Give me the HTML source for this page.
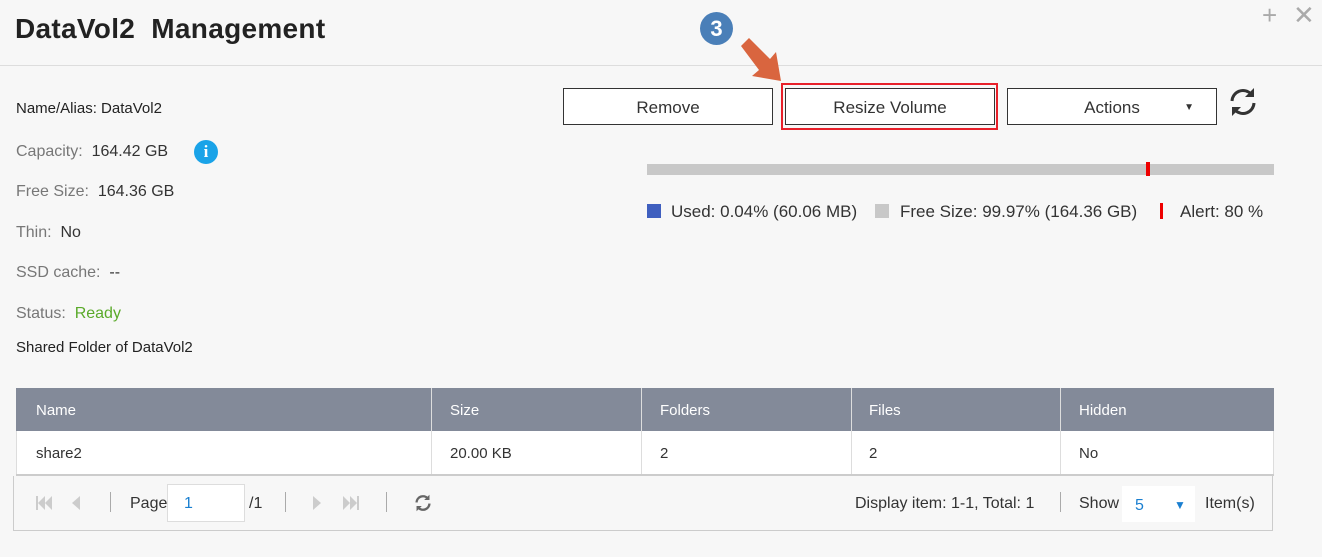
<!DOCTYPE html>
<html><head><style>
body{margin:0;width:1322px;height:557px;background:#f7f7f7;font-family:"Liberation Sans",sans-serif;position:relative;overflow:hidden;color:#333}
.a{position:absolute;white-space:nowrap}
.btn{position:absolute;height:37px;border:1px solid #333;background:#fff;box-sizing:border-box;font-size:17px;text-align:center;line-height:37px;color:#333}
.lbl{color:#777;font-size:16px}
.th{position:absolute;top:389px;height:44px;line-height:44px;color:#fff;font-size:15px}
.td{position:absolute;top:432px;height:44px;line-height:44px;font-size:15px;color:#333}
.vl{position:absolute;width:1px;background:#ddd}
</style></head><body>
<div class="a" style="left:15px;top:13px;font-size:28px;font-weight:bold;color:#222;letter-spacing:0.3px">DataVol2&nbsp; Management</div>
<div class="a" style="left:1262px;top:0px;font-size:26px;color:#aaa">+</div>
<div class="a" style="left:1293px;top:0px;font-size:26px;color:#aaa">✕</div>
<div class="a" style="left:0;top:65px;width:1322px;height:1px;background:#ddd"></div>

<div class="a" style="left:700px;top:12px;width:33px;height:33px;border-radius:50%;background:#4a7fb8;color:#fff;font-weight:bold;font-size:22px;text-align:center;line-height:33px">3</div>
<svg class="a" style="left:738px;top:38px" width="48" height="45"><polygon points="3,8 11,0 32,21 38,14 43,43 14,38 21,32" fill="#d9653f"/></svg>

<div class="a" style="left:16px;top:100px;font-size:15px;color:#222">Name/Alias: DataVol2</div>
<div class="a lbl" style="left:16px;top:143px">Capacity: &nbsp;<span style="color:#333">164.42 GB</span></div>
<div class="a" style="left:194px;top:140px;width:24px;height:24px;border-radius:50%;background:#1aa3e8;color:#fff;font-weight:bold;text-align:center;line-height:24px;font-size:17px;font-family:'Liberation Serif',serif">i</div>
<div class="a lbl" style="left:16px;top:183px">Free Size: &nbsp;<span style="color:#333">164.36 GB</span></div>
<div class="a lbl" style="left:16px;top:224px">Thin: &nbsp;<span style="color:#333">No</span></div>
<div class="a lbl" style="left:16px;top:264px">SSD cache: &nbsp;<span style="color:#333">--</span></div>
<div class="a lbl" style="left:16px;top:305px">Status: &nbsp;<span style="color:#5aaa2a">Ready</span></div>
<div class="a" style="left:16px;top:339px;font-size:15px;color:#222">Shared Folder of DataVol2</div>

<div class="btn" style="left:563px;top:88px;width:210px">Remove</div>
<div class="a" style="left:781px;top:83px;width:217px;height:47px;border:2px solid #e8202a;box-sizing:border-box"></div>
<div class="btn" style="left:785px;top:88px;width:210px">Resize Volume</div>
<div class="btn" style="left:1007px;top:88px;width:210px">Actions<span style="position:absolute;right:22px;font-size:10px">▼</span></div>
<svg class="a" style="left:1226px;top:85px" width="34" height="34" viewBox="0 0 34 34" fill="none" stroke="#333" stroke-width="3"><path d="M6 16a11 11 0 0 1 19-7"/><path d="M28 18a11 11 0 0 1-19 7"/><polygon points="28,3 28,12 19,12" fill="#333" stroke="none"/><polygon points="6,31 6,22 15,22" fill="#333" stroke="none"/></svg>

<div class="a" style="left:647px;top:164px;width:627px;height:11px;background:#c8c8c8"></div>
<div class="a" style="left:1146px;top:162px;width:4px;height:14px;background:#e00"></div>
<div class="a" style="left:647px;top:204px;width:14px;height:14px;background:#3f5fbf"></div>
<div class="a" style="left:671px;top:202px;font-size:17px">Used: 0.04% (60.06 MB)</div>
<div class="a" style="left:875px;top:204px;width:14px;height:14px;background:#c8c8c8"></div>
<div class="a" style="left:900px;top:202px;font-size:17px">Free Size: 99.97% (164.36 GB)</div>
<div class="a" style="left:1160px;top:203px;width:3px;height:16px;background:#e00"></div>
<div class="a" style="left:1180px;top:202px;font-size:17px">Alert: 80 %</div>

<div class="a" style="left:16px;top:388px;width:1258px;height:43px;background:#838a99"></div>
<div class="a" style="left:16px;top:431px;width:1256px;height:43px;background:#fff;border-left:1px solid #ddd;border-right:1px solid #ddd"></div>
<div class="a" style="left:16px;top:474px;width:1258px;height:2px;background:#ccc"></div>
<div class="vl" style="left:431px;top:388px;height:86px"></div>
<div class="vl" style="left:641px;top:388px;height:86px"></div>
<div class="vl" style="left:851px;top:388px;height:86px"></div>
<div class="vl" style="left:1060px;top:388px;height:86px"></div>
<div class="th" style="left:36px">Name</div><div class="th" style="left:450px">Size</div><div class="th" style="left:660px">Folders</div><div class="th" style="left:869px">Files</div><div class="th" style="left:1079px">Hidden</div>
<div class="td" style="left:36px">share2</div><div class="td" style="left:450px">20.00 KB</div><div class="td" style="left:660px">2</div><div class="td" style="left:869px">2</div><div class="td" style="left:1079px">No</div>

<div class="a" style="left:13px;top:476px;width:1260px;height:55px;border:1px solid #ccc;border-top:none;box-sizing:border-box"></div>
<svg class="a" style="left:36px;top:494px" width="50" height="18" fill="#ccc"><rect x="0" y="2" width="2" height="14"/><polygon points="2,9 9,2 9,16"/><polygon points="9,9 16,2 16,16"/><polygon points="36,9 44,2 44,16"/></svg>
<div class="a" style="left:110px;top:492px;width:1px;height:20px;background:#aaa"></div>
<div class="a" style="left:130px;top:495px;font-size:16px">Page</div>
<div class="a" style="left:167px;top:484px;width:78px;height:38px;background:#fff;border:1px solid #ddd;box-sizing:border-box;color:#1a7fd0;font-size:16px;padding:10px 0 0 16px">1</div>
<div class="a" style="left:249px;top:495px;font-size:16px">/1</div>
<div class="a" style="left:285px;top:492px;width:1px;height:20px;background:#aaa"></div>
<svg class="a" style="left:313px;top:494px" width="50" height="18" fill="#ccc"><polygon points="0,2 8,9 0,16"/><polygon points="30,2 37,9 30,16"/><polygon points="37,2 44,9 37,16"/><rect x="44" y="2" width="2" height="14"/></svg>
<div class="a" style="left:386px;top:492px;width:1px;height:20px;background:#aaa"></div>
<svg class="a" style="left:413px;top:492px" width="20" height="22" viewBox="0 0 34 34" fill="none" stroke="#666" stroke-width="4"><path d="M6 16a11 11 0 0 1 19-7"/><path d="M28 18a11 11 0 0 1-19 7"/><polygon points="28,3 28,12 19,12" fill="#666" stroke="none"/><polygon points="6,31 6,22 15,22" fill="#666" stroke="none"/></svg>
<div class="a" style="left:855px;top:495px;font-size:16px">Display item: 1-1, Total: 1</div>
<div class="a" style="left:1060px;top:492px;width:1px;height:20px;background:#aaa"></div>
<div class="a" style="left:1079px;top:495px;font-size:16px">Show</div>
<div class="a" style="left:1122px;top:486px;width:73px;height:36px;background:#fff"></div>
<div class="a" style="left:1135px;top:497px;font-size:16px;color:#1a7fd0">5</div>
<div class="a" style="left:1174px;top:498px;font-size:12px;color:#1a7fd0">▼</div>
<div class="a" style="left:1205px;top:495px;font-size:16px">Item(s)</div>
</body></html>
